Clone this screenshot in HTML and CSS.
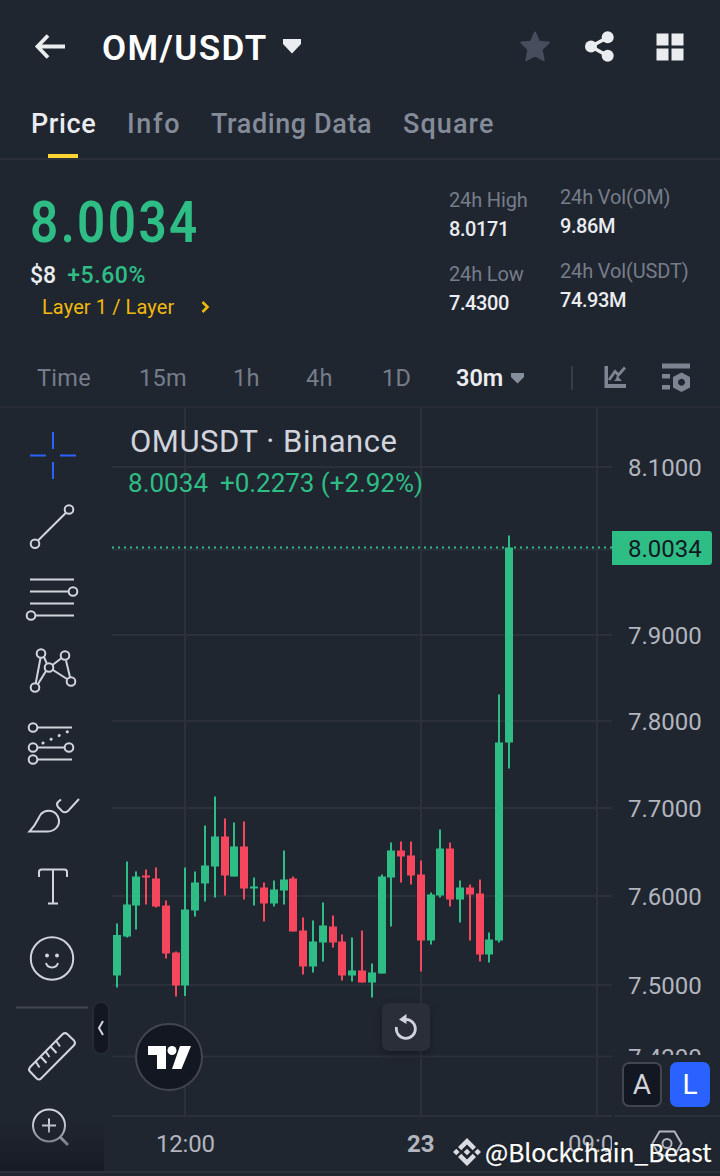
FILE: index.html
```html
<!DOCTYPE html>
<html lang="en">
<head>
<meta charset="utf-8">
<title>OM/USDT</title>
<link rel="stylesheet" href="styles.css">
</head>
<body>
<div class="app">
  <header class="topbar">
    <svg class="back" width="32" height="28" viewBox="34 33 32 28"><path d="M65 46.500H38M48 35.500 37.5 46.500 48 57.500" fill="none" stroke="#eaecef" stroke-width="3.8"/></svg>
    <h1 class="pair">OM/USDT</h1>
    <svg class="caret" width="18" height="15" viewBox="0 0 18 15"><path d="M0 0H18V5L9 14.5 0 5Z" fill="#eaecef"/></svg>
    <div class="actions">
      <svg width="30" height="31" viewBox="0 0 30 31"><path d="M15 1.5 19 10.7 28.8 11.6 21.6 18.6 23.7 29 15 24.3 6.3 29 8.400 18.6 1.200 11.600 11 10.700Z" fill="#474d5c" stroke="#474d5c" stroke-width="2" stroke-linejoin="round"/></svg>
      <svg width="29" height="31" viewBox="0 0 29 31"><path d="M22.500 6.500 6 15.500 22.500 24.800" fill="none" stroke="#eaecef" stroke-width="3.600"/><g fill="#eaecef"><circle cx="22.700" cy="6.300" r="6"/><circle cx="6" cy="15.500" r="6"/><circle cx="22.700" cy="24.700" r="6"/></g></svg>
      <svg width="28" height="28" viewBox="0 0 28 28"><path d="M.5.5h12v12H.5zM15.500.5h12v12h-12zM.5 15.500h12v12H.5zM15.500 15.500h12v12h-12z" fill="#eaecef"/></svg>
    </div>
  </header>

  <nav class="tabs">
    <span class="tab active">Price</span><span class="tab info">Info</span><span class="tab">Trading Data</span><span class="tab square">Square</span>
  </nav>

  <section class="summary">
    <div class="quote">
      <div class="price">8.0034</div>
      <div class="change"><span class="fiat">$8</span><span class="pct">+5.60%</span></div>
      <div class="tag"><span>Layer 1 / Layer</span><svg width="9" height="12" viewBox="0 0 9 12"><path d="M1.500 1 6.500 6 1.500 11" fill="none" stroke="#f0b90b" stroke-width="2.600"/></svg></div>
    </div>
    <dl class="stats stats-price">
      <dt>24h High</dt><dd>8.0171</dd>
      <dt>24h Low</dt><dd>7.4300</dd>
    </dl>
    <dl class="stats stats-vol">
      <dt>24h Vol(OM)</dt><dd>9.86M</dd>
      <dt>24h Vol(USDT)</dt><dd>74.93M</dd>
    </dl>
  </section>

  <nav class="intervals">
    <span>Time</span><span>15m</span><span>1h</span><span>4h</span><span>1D</span>
    <span class="current">30m<svg width="13" height="11" viewBox="0 0 13 11"><path d="M0 0H13V4L6.500 10.500 0 4Z" fill="#848e9c"/></svg></span>
    <i class="divider"></i>
    <svg class="ic-chart" width="24" height="24" viewBox="604 365 24 24"><path d="M604.500 366H608V384H626V388H604.500Z" fill="#7e8491"/><path d="M609 380 615 371.500 618.500 375 625 367.500" fill="none" stroke="#7e8491" stroke-width="2.800"/><path d="M617 375 620 379 622 381H614L616 379Z" fill="#7e8491"/></svg>
    <svg class="ic-set" width="28" height="29" viewBox="662 363 28 29"><path d="M662 363.500h28v5h-28zM662 374h8v4.500h-8zM662 385h8v4.500h-8z" fill="#7e8491"/><path fill-rule="evenodd" d="M681.500 372.500 690 377V387.500L681.500 392 673 387.500V377ZM681.500 378.700a3.500 3.500 0 1 0 .01 0Z" fill="#7e8491"/></svg>
  </nav>

  <main class="workspace">
    <aside class="tools">
      <svg width="104" height="763" viewBox="0 408 104 763">
        <defs><linearGradient id="fade" x1="0" y1="0" x2="0" y2="1"><stop offset="0" stop-color="#171b25" stop-opacity="0"/><stop offset="1" stop-color="#171b25"/></linearGradient></defs>
        <path d="M53 432v17M53 462v17M30 455.500h16M60 455.500h16" stroke="#2962ff" stroke-width="2"/>
        <g fill="none" stroke="#d1d4dc" stroke-width="2">
          <path d="M38.300 540.300 65.700 513"/><circle cx="35" cy="543.700" r="4.300"/><circle cx="69" cy="509.500" r="4.300"/>
          <path d="M30 579.500h44M30 591.500h38.500M30 603.500h44M35.500 615.500H74"/><circle cx="73" cy="591.500" r="4.300"/><circle cx="31" cy="615.500" r="4.300"/>
          <path d="M40.500 658 35.800 683M44 657l3 7M52.500 665 61 658.500M66 660.500 70 677M53 670 67 679M46 671 38 684"/>
          <circle cx="41" cy="653.500" r="4.300"/><circle cx="65" cy="655.500" r="4.300"/><circle cx="49" cy="667.500" r="4.300"/><circle cx="71" cy="681.500" r="4.300"/><circle cx="35" cy="687.500" r="4.300"/>
          <path d="M37.500 727.500H72M37.500 747.500h27M37.500 759.500H72"/><circle cx="33" cy="727.500" r="4.300"/><circle cx="33" cy="747.500" r="4.300"/><circle cx="69" cy="747.500" r="4.300"/><circle cx="33" cy="759.500" r="4.300"/>
          <path d="M43 743 69 731" stroke-width="3" stroke-linecap="round" stroke-dasharray=".1 8.800"/>
          <path d="M29.500 831.500C37 824 38 818 41 814 46 808.500 57 809.500 59 820 59.500 827 54 831.500 47 831.500ZM61 799.500 58 802C56.500 803.500 57 805.500 58 807L62.500 811.500C64.500 813 66 812.500 68 811L79 799"/>
          <path d="M39 877V872Q39 869.500 41.500 869.500H64.500Q67 869.500 67 872V877M53 870V903.500M48 903.500H58"/>
          <circle cx="52" cy="958.500" r="21.200"/><path d="M46 963C48 969 56 969 58 963"/>
          <path d="M16 1007.500H88" stroke="#434651"/>
          <path d="M62.500 1034.200Q65 1032 67.500 1034.200L74 1040.500Q76 1043 74 1045.300L41 1078.500Q39 1080.500 36.700 1078.500L30 1071.500Q28 1069.500 30 1067.300ZM36 1062l3.500 5.500M41 1057l5.500 6M46 1052l3.500 5M51 1047l5.500 6M56.500 1041.500l3.500 5"/>
          <circle cx="49" cy="1125.500" r="16"/><path d="M42 1125.500h14M49 1118.500v14"/><path d="M60 1137 68 1145" stroke-width="3"/>
        </g>
        <circle cx="47" cy="955.500" r="2" fill="#d1d4dc"/><circle cx="57" cy="955.500" r="2" fill="#d1d4dc"/>
        <rect x="0" y="1120" width="104" height="51" fill="url(#fade)"/>
      </svg>
    </aside>

    <section class="chart">
      <svg class="plot" width="616" height="763" viewBox="104 408 616 763">
        <g class="grid">
          <path d="M185 408V1115M421 408V1115M597 408V1115"/>
          <path d="M112 467H612M112 549.500H612M112 635H612M112 721H612M112 808H612M112 896H612M112 985H612M112 1056.500H612"/>
          <path d="M112 1116H612M614 1116H720"/>
        </g>
        <path d="M112 547.500H612" stroke="#2ebd85" stroke-width="2" stroke-dasharray="2 4"/>
        <g id="candles"></g>
        <text class="legend" x="130" y="451.500" textLength="267">OMUSDT · Binance</text>
        <text class="legend-val" x="128" y="491.500" textLength="80">8.0034</text>
        <text class="legend-val" x="220" y="491.500" textLength="203">+0.2273 (+2.92%)</text>
        <path d="M612 531H709Q712 531 712 534V562Q712 565 709 565H612Z" fill="#2ebd85"/>
        <text class="axis last" x="628" y="556.500">8.0034</text>
        <g class="axis">
          <text x="628" y="475.500">8.1000</text><text x="628" y="643.500">7.9000</text><text x="628" y="729.500">7.8000</text>
          <text x="628" y="816.500">7.7000</text><text x="628" y="904.500">7.6000</text><text x="628" y="993.500">7.5000</text>
          <clipPath id="axisClip"><rect x="612" y="1040" width="108" height="15"/></clipPath>
          <text x="628" y="1065.500" clip-path="url(#axisClip)">7.4200</text>
          <text x="156" y="1151.500" textLength="59">12:00</text>
          <text x="407" y="1151.500" font-weight="700">23</text>
          <clipPath id="timeClip"><rect x="560" y="1120" width="52" height="45"/></clipPath>
          <text x="568" y="1151.500" clip-path="url(#timeClip)">09:00</text>
        </g>
        <g fill="none" stroke="#b2b5be" stroke-width="2"><path d="M659.500 1131.500H674.500L681.500 1143.500 674.500 1155.500H659.500L652.500 1143.500Z"/><circle cx="667" cy="1143.500" r="4.500"/></g>
      </svg>

      <div class="handle"><svg width="8" height="16" viewBox="0 0 8 16"><path d="M6 1 2 8 6 15" fill="none" stroke="#d1d4dc" stroke-width="2"/></svg></div>
      <div class="tv"><svg width="44" height="23" viewBox="0 0 44 23"><path d="M0 0H18V23H9V9H0ZM32 0H43L33.500 23H24Z" fill="#fff"/><circle cx="24" cy="4.500" r="4.500" fill="#fff"/></svg></div>
      <div class="reset"><svg width="24" height="26" viewBox="0 0 24 26"><path d="M2.500 13A9.500 9.500 0 1 0 10 5.500" fill="none" stroke="#d1d4dc" stroke-width="2.800"/><path d="M5 5.500 12.500 0V10Z" fill="#d1d4dc"/></svg></div>
      <div class="scale"><span class="btn auto">A</span><span class="btn log">L</span></div>
      <div class="credit">
        <svg width="28" height="28" viewBox="0 0 28 28"><g fill="#d9dbe1"><path d="M14 0 23 9 19.700 12.200 14 6.600 8.300 12.200 5 9ZM14 28 23 19 19.700 15.800 14 21.400 8.300 15.800 5 19ZM14 10.700 17.300 14 14 17.300 10.700 14ZM3.300 10.700 6.600 14 3.300 17.300 0 14ZM24.700 10.700 28 14 24.700 17.300 21.400 14Z"/></g></svg>
        <span>@Blockchain_Beast</span>
      </div>
    </section>
  </main>
</div>
<script src="chart.js"></script>
</body>
</html>
```
FILE: styles.css
```css
* { box-sizing: border-box; margin: 0; }
body { background: #202630; font-family: Roboto, "Liberation Sans", sans-serif; color: #eaecef; }
svg { display: block; flex: none; }
.app { width: 720px; height: 1176px; overflow: hidden; display: flex; flex-direction: column; }

.topbar { height: 94px; display: flex; align-items: center; padding: 0 36px 0 34px; }
.pair { font-size: 35px; font-weight: 600; line-height: 40px; margin-left: 36px; width: 164px; padding-top: 4px; letter-spacing: 1.4px; color: #fff; white-space: nowrap; }
.caret { margin-left: 17px; margin-top: -1px; }
.actions { margin-left: auto; display: flex; align-items: center; margin-top: -1px; }
.actions svg + svg { margin-left: 35px; }
.actions svg:last-child { margin-left: 42px; }

.tabs { height: 66px; border-bottom: 2px solid #2b303b; padding: 0 31px; display: grid; grid-template-columns: 96px 84px 192px auto; font-size: 27px; font-weight: 500; line-height: 60px; color: #848b99; letter-spacing: .6px; white-space: nowrap; }
.tab { height: 64px; }
.info { letter-spacing: 1.7px; }
.square { letter-spacing: 1.1px; }
.active { color: #eaecef; display: flex; flex-direction: column; }
.active::after { content: ""; width: 30px; height: 6px; margin: auto 0 0 17px; background: #fcd535; }

.summary { height: 190px; display: flex; white-space: nowrap; }
.quote { width: 449px; padding: 27px 0 0 30px; }
.price { height: 70px; line-height: 71px; font-size: 57.5px; font-weight: 600; color: #2ebd85; letter-spacing: 2.8px; transform: scaleX(.86); transform-origin: 0 50%; }
.change { display: flex; gap: 11px; height: 36px; line-height: 38px; font-size: 23px; }
.fiat { font-weight: 500; }
.pct { color: #2ebd85; font-weight: 500; letter-spacing: .6px; }
.tag { display: flex; align-items: center; gap: 27px; height: 28px; padding-left: 12px; font-size: 20px; color: #f0b90b; letter-spacing: .1px; }
.stats { font-size: 20px; letter-spacing: -.15px; }
.stats-price { width: 111px; padding-top: 25px; }
.stats-vol { padding-top: 22px; }
.stats dt { line-height: 30px; height: 30px; color: #767d8a; }
.stats dd { line-height: 28px; height: 44px; font-weight: 500; letter-spacing: -.4px; }

.intervals { height: 58px; border-bottom: 2px solid #272c37; padding: 0 30px 0 37px; display: grid; grid-template-columns: 102px 94px 73px 76px 74px 115px 33px 58px 28px; align-items: center; font-size: 23.5px; color: #767d8a; letter-spacing: .3px; }
.intervals .current { color: #eaecef; font-weight: 600; letter-spacing: 0; display: flex; align-items: center; gap: 8px; }
.divider { width: 2px; height: 24px; background: #373c47; }
.intervals > svg { margin-top: -2px; }

.workspace { height: 763px; display: flex; box-shadow: 0 2px #2b303b; }
.tools { width: 104px; }
.chart { position: relative; width: 616px; }
.grid path { stroke: #2b303b; stroke-width: 2; fill: none; }
.legend { font-size: 31px; fill: #d1d4dc; }
.legend-val { font-size: 26px; fill: #2ebd85; }
.axis { font-size: 24px; fill: #b2b5be; }
.last { fill: #131722; }
.up { fill: #2ebd85; }
.down { fill: #f6465d; }

.handle { position: absolute; left: -12px; top: 593px; width: 18px; height: 54px; border-radius: 9px; background: #131722; border: 2px solid #252a35; display: flex; align-items: center; justify-content: center; }
.tv { position: absolute; left: 31px; top: 615px; width: 68px; height: 68px; border-radius: 50%; background: #131722; border: 2px solid #434651; display: flex; align-items: center; justify-content: center; padding: 1px 0 0 2px; }
.reset { position: absolute; left: 278px; top: 595px; width: 48px; height: 48px; border-radius: 7px; background: #2a2e39; box-shadow: 0 3px 7px rgba(0,0,0,.3); display: flex; align-items: center; justify-content: center; }
.scale { position: absolute; left: 518px; top: 654px; display: flex; gap: 8px; }
.btn { width: 40px; height: 45px; border-radius: 7px; display: flex; align-items: center; justify-content: center; font-size: 28px; }
.auto { background: #131722; border: 2px solid #434651; color: #d1d4dc; }
.log { background: #2962ff; color: #fff; }
.credit { position: absolute; left: 349px; top: 726px; height: 36px; display: flex; align-items: center; gap: 4px; font-family: "Noto Sans CJK SC", "Noto Sans", sans-serif; font-size: 24.5px; line-height: 34px; color: #fff; white-space: nowrap; text-shadow: 0 0 2px rgba(0,0,0,.6); -webkit-text-stroke: .25px #fff; }
.credit span { margin-top: -1px; }
```
FILE: chart.js
```js
// Each candle: [direction, centre x, wick top, wick bottom, body top, body bottom]
const candles = [
  [1,117,923.5,987.5,935,975.5],[1,127,861.5,937.5,904.5,936.5],[1,136,871.5,929.5,876.5,905.5],
  [0,146,869.5,904.5,875.5,877.5],[0,156,867.5,907.5,878.5,906.5],[0,166,900.5,958.5,905.5,953.5],
  [0,176,951.5,996.5,952.5,985.5],[1,185,867.5,996,909.5,985.5],[1,195,871.5,916.5,882.5,910.5],
  [1,205,825.5,901.5,865.5,883.5],[1,215,796.5,897.5,836.5,866.5],[0,225,818.5,895.5,836.5,875.5],
  [1,234,822.5,876.5,846.5,876.5],[0,244,821.5,899.5,846.5,888.5],[1,254,877.5,905.5,886.5,888.5],
  [0,264,882.5,921.5,887.5,903.5],[1,274,880.5,906.5,889.5,903.5],[1,284,850.5,904.5,879.5,890.5],
  [0,293,876.5,931.5,878.5,931.5],[0,303,917.5,974.5,930.5,966.5],[1,313,920.5,972.5,941.5,966.5],
  [1,323,902.5,961.5,925.5,942.5],[0,333,915.5,947.5,926.5,942.5],[0,342,934.5,980.5,941.5,975.5],
  [1,352,937.5,981.5,970.5,975.5],[0,362,930.5,982.5,970.5,982.5],[1,372,963.5,997.5,972.5,982.5],
  [1,382,874.5,973.5,876.5,973.5],[1,391,842.5,926.5,850.5,877.5],[0,401,841.5,882.5,850.5,856.5],
  [0,411,841.5,884.5,855.5,875.5],[0,421,860.5,971.5,874.5,940.5],[1,431,892.5,944.5,894.5,940.5],
  [1,440,829.5,897.5,848.5,895.5],[0,450,842.5,906.5,848.5,899.5],[1,460,880.5,922.5,887.5,899.5],
  [0,470,884.5,940.5,887.5,894.5],[0,480,879.5,961.5,893.5,954.5],[1,489,932.5,962.5,939.5,954.5],
  [1,499,694.5,942.5,742.5,940.5],[1,509,535.5,768.5,547.5,742.5]
];
const layer = document.getElementById('candles');
function bar(cls, x, y, w, h) {
  const r = document.createElementNS('http://www.w3.org/2000/svg', 'rect');
  r.setAttribute('class', cls);
  r.setAttribute('x', x);
  r.setAttribute('y', y);
  r.setAttribute('width', w);
  r.setAttribute('height', h);
  layer.appendChild(r);
}
for (const [up, x, high, low, top, bottom] of candles) {
  const cls = up ? 'up' : 'down';
  bar(cls, x - 1, high, 2, low - high);
  bar(cls, x - 4, top, 8, bottom - top);
}
```
